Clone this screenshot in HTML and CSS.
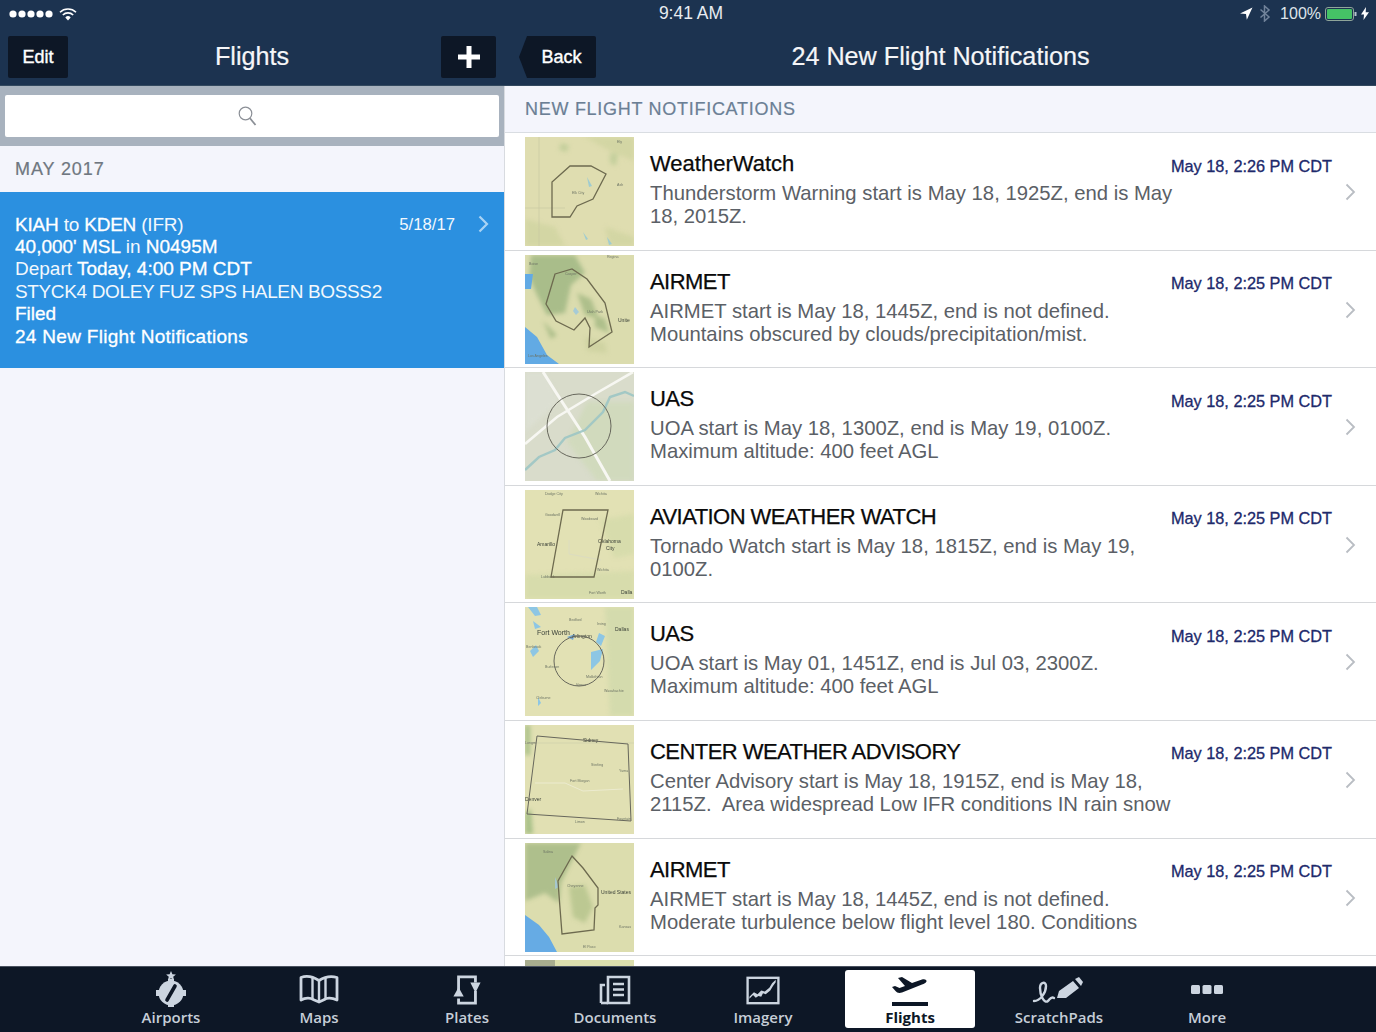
FILE: index.html
```html
<!DOCTYPE html>
<html lang="en">
<head>
<meta charset="utf-8">
<title>Flights</title>
<link rel="stylesheet" href="styles.css">
</head>
<body>
<div class="app">
  <header class="top">
    <div class="status">
      <div class="status-left">
        <svg class="dots" width="44" height="8" viewBox="0 0 44 8"><g fill="#fff"><circle cx="4" cy="4" r="3.6"/><circle cx="13" cy="4" r="3.6"/><circle cx="22" cy="4" r="3.6"/><circle cx="31" cy="4" r="3.6"/><circle cx="40" cy="4" r="3.6"/></g></svg>
        <svg width="18" height="14" viewBox="0 0 18 14"><g fill="none" stroke="#fff" stroke-width="1.6"><path d="M1 5.2a11.5 11.5 0 0 1 16 0"/><path d="M3.8 8a7.5 7.5 0 0 1 10.4 0"/></g><path d="M6.3 10.4a3.8 3.8 0 0 1 5.4 0L9 13.4z" fill="#fff"/></svg>
      </div>
      <div class="clock">9:41 AM</div>
      <div class="status-right">
        <svg width="13" height="13" viewBox="0 0 13 13"><path d="M12.5.5 0 6.4l6 .6.8 5.8z" fill="#fff"/></svg>
        <svg class="bt" width="12" height="17" viewBox="0 0 12 17"><path d="M1.5 4.5 10 12l-4.500 4V1l4.500 4L1.500 12.500" fill="none" stroke="#71839a" stroke-width="1.500"/></svg>
        <span class="pct">100%</span>
        <svg width="32" height="14" viewBox="0 0 32 14"><rect x=".5" y=".5" width="28" height="13" rx="2.500" fill="none" stroke="#8fa59a"/><rect x="2" y="2" width="25" height="10" rx="1.200" fill="#45c266"/><rect x="29.500" y="5" width="2" height="4" fill="#b8c4cf"/></svg>
        <svg class="bolt" width="8" height="13" viewBox="0 0 8 13"><path d="M5 0 0 7.500h3L2.500 13 8 5.200H4.700z" fill="#fff"/></svg>
      </div>
    </div>
    <div class="navs">
      <nav class="nav nav-left">
        <div class="nav-start"><span class="btn btn-edit">Edit</span></div>
        <h1 class="nav-title">Flights</h1>
        <div class="nav-end"><span class="btn btn-add"><svg width="22" height="22" viewBox="0 0 22 22"><path d="M8.500 0h5v8.500H22v5h-8.500V22h-5v-8.500H0v-5h8.500z" fill="#fff"/></svg></span></div>
      </nav>
      <nav class="nav nav-right">
        <div class="nav-start"><span class="btn btn-back">Back</span></div>
        <h1 class="nav-title">24 New Flight Notifications</h1>
        <div class="nav-end"></div>
      </nav>
    </div>
  </header>

  <main class="panes">
    <aside class="master">
      <div class="searchband">
        <div class="searchbox">
          <svg width="19" height="20" viewBox="0 0 19 20"><circle cx="7.500" cy="7.500" r="6.300" fill="none" stroke="#8b8f96" stroke-width="1.200"/><path d="M12 12.300 17.500 19" stroke="#8b8f96" stroke-width="1.800" fill="none"/></svg>
        </div>
      </div>
      <div class="month">MAY 2017</div>
      <div class="flight">
        <div class="flight-text">
          <div class="flight-head"><span class="tight"><b>KIAH</b> to <b>KDEN</b> (IFR)</span><span class="flight-date">5/18/17</span></div>
          <div><b>40,000' MSL</b> in <b>N0495M</b></div>
          <div>Depart <b>Today, 4:00 PM CDT</b></div>
          <div class="route">STYCK4 DOLEY FUZ SPS HALEN BOSSS2</div>
          <div><b>Filed</b></div>
          <div class="wide"><b>24 New Flight Notifications</b></div>
        </div>
        <svg class="flight-chev" width="11" height="18" viewBox="0 0 11 18"><path d="M1.500 1.500 9 9l-7.500 7.500" fill="none" stroke="#a9d3f4" stroke-width="2.200"/></svg>
      </div>
    </aside>

    <section class="detail">
      <div class="detail-head">NEW FLIGHT NOTIFICATIONS</div>
      <div class="list">

        <article class="row">
          <svg class="thumb" viewBox="0 0 109 109"><rect width="109" height="109" fill="#dfddb0"/><g class="soft"><path d="M60 0h49v24L85 14zM0 82l30 8 10 19H0zM80 90l29 10v9H85z" fill="#d3d6a4"/><path d="M36 6l8 2-2 7-8-2zM85 16l8 1-2 12-6-3z" fill="#c4cf9c"/></g><path d="M14 0v109M0 71h40" stroke="#c8c8a4" stroke-width=".7" fill="none"/><path d="M62 40l5 9-3 1zM58 95l5 7-2 1zM82 100l5 7-3 1z" fill="#a0ccd0"/><text x="47" y="57" class="maplabel">Elk City</text><text x="92" y="6" class="maplabel">Ely</text><text x="92" y="49" class="maplabel">Ash</text><path class="area" d="M45 29H66L81 37 68 62 52 69 45 80H27V45Z"/></svg>
          <div class="row-main">
            <div class="row-head"><h2>WeatherWatch</h2><time>May 18, 2:26 PM CDT</time></div>
            <p>Thunderstorm Warning start is May 18, 1925Z, end is May<br>18, 2015Z.</p>
          </div>
          <svg class="chev" width="11" height="18" viewBox="0 0 11 18"><path d="M1.500 1.500 9 9l-7.500 7.500" fill="none" stroke="#b9bdc3" stroke-width="1.800"/></svg>
        </article>

        <article class="row">
          <svg class="thumb" viewBox="0 0 109 109"><rect width="109" height="109" fill="#dbdcae"/><g class="soft"><path d="M6 0H50L60 18 46 30 40 58 22 60 12 40 4 22Z" fill="#a9bd8a"/><path d="M52 38l14 6 8 20-14-4zM70 60l10 4 4 14-14-6zM18 66l14 14-6 4z" fill="#aebf8b"/><path d="M60 82l20 6 2 10-20-2z" fill="#cfd3a2"/></g><path d="M0 72 12 82 22 100 34 109H0ZM0 19H8L6 34H0Z" fill="#62aae4"/><path d="M50 52l4 5-3 3-3-4z" fill="#a6cbd6"/><text x="4" y="10" class="maplabel">Boise</text><text x="40" y="20" class="maplabel">Casper</text><text x="3" y="102" class="maplabel">Los Angeles</text><text x="62" y="58" class="maplabel">Utah Park</text><text x="82" y="3" class="maplabel">Regina</text><text x="93" y="67" class="maplabel dark">Unite</text><path class="area" d="M30 19 47 14 62 24 80 48 87 77 64 92 65 73 60 63 49 75 31 66 21 49Z"/></svg>
          <div class="row-main">
            <div class="row-head"><h2 class="caps">AIRMET</h2><time>May 18, 2:25 PM CDT</time></div>
            <p>AIRMET start is May 18, 1445Z, end is not defined.<br>Mountains obscured by clouds/precipitation/mist.</p>
          </div>
          <svg class="chev" width="11" height="18" viewBox="0 0 11 18"><path d="M1.500 1.500 9 9l-7.500 7.500" fill="none" stroke="#b9bdc3" stroke-width="1.800"/></svg>
        </article>

        <article class="row">
          <svg class="thumb" viewBox="0 0 109 109"><rect width="109" height="109" fill="#d9dccb"/><g class="soft"><path d="M62 30l-20 40 30 39h37V30z" fill="#d1dabd"/><path d="M0 0h20l14 30L0 60z" fill="#dcdfd2"/></g><path d="M18 0 32 22 60 65 85 109" stroke="#f7f7f2" stroke-width="3" fill="none"/><path d="M0 72 32 45 70 22 108 0" stroke="#f7f7f2" stroke-width="2.600" fill="none"/><path d="M0 98 14 85 30 78 40 66 60 58 78 40 85 25 100 20 109 24" stroke="#9cc5c4" stroke-width="2.400" fill="none" class="softline"/><circle class="area thin" cx="54" cy="54" r="32"/></svg>
          <div class="row-main">
            <div class="row-head"><h2 class="caps">UAS</h2><time>May 18, 2:25 PM CDT</time></div>
            <p>UOA start is May 18, 1300Z, end is May 19, 0100Z.<br>Maximum altitude: 400 feet AGL</p>
          </div>
          <svg class="chev" width="11" height="18" viewBox="0 0 11 18"><path d="M1.500 1.500 9 9l-7.500 7.500" fill="none" stroke="#b9bdc3" stroke-width="1.800"/></svg>
        </article>

        <article class="row">
          <svg class="thumb" viewBox="0 0 109 109"><rect width="109" height="109" fill="#e2e1b4"/><g class="soft"><path d="M0 85l109-4v28H0zM75 30l34-6v40l-20 4z" fill="#d7dcac"/></g><path d="M44 50v14l32 6" stroke="#dcdcc0" fill="none"/><text x="20" y="5" class="maplabel">Dodge City</text><text x="70" y="5" class="maplabel">Wichita</text><text x="20" y="26" class="maplabel">Goodwell</text><text x="56" y="30" class="maplabel">Woodward</text><text x="12" y="56" class="maplabel dark">Amarillo</text><text x="73" y="53" class="maplabel dark">Oklahoma</text><text x="81" y="60" class="maplabel dark">City</text><text x="72" y="81" class="maplabel">Wichita</text><text x="16" y="88" class="maplabel">Lubbock</text><text x="64" y="104" class="maplabel">Fort Worth</text><text x="96" y="104" class="maplabel dark">Dalla</text><path class="area" d="M38 20H83L69 87H26Z"/></svg>
          <div class="row-main">
            <div class="row-head"><h2 class="caps">AVIATION WEATHER WATCH</h2><time>May 18, 2:25 PM CDT</time></div>
            <p>Tornado Watch start is May 18, 1815Z, end is May 19,<br>0100Z.</p>
          </div>
          <svg class="chev" width="11" height="18" viewBox="0 0 11 18"><path d="M1.500 1.500 9 9l-7.500 7.500" fill="none" stroke="#b9bdc3" stroke-width="1.800"/></svg>
        </article>

        <article class="row">
          <svg class="thumb" viewBox="0 0 109 109"><rect width="109" height="109" fill="#e2e1b4"/><g class="soft"><path d="M80 0h29v109H85z" fill="#d4dbad"/></g><path d="M3 0h9l4 8-6 1zM8 14l8 6-6 2zM5 44l6-6 3 6-6 6zM74 26l6 3-4 10-5-4zM66 45l12-3-3 12-9 9zM13 90l3 6-3 3z" fill="#8dc6e4"/><path d="M42 30l8-3-2 6z" fill="#74a8d4"/><text x="44" y="14" class="maplabel">Bedford</text><text x="72" y="18" class="maplabel">Irving</text><text x="90" y="24" class="maplabel dark">Dallas</text><text x="12" y="28" class="maplabel dark big">Fort Worth</text><text x="47" y="31" class="maplabel dark">Arlington</text><text x="1" y="41" class="maplabel">Benbrook</text><text x="20" y="61" class="maplabel">Burleson</text><text x="61" y="71" class="maplabel">Midlothian</text><text x="51" y="79" class="maplabel">Venus</text><text x="79" y="85" class="maplabel">Waxahachie</text><text x="11" y="92" class="maplabel">Cleburne</text><circle class="area thin" cx="54" cy="54" r="25"/></svg>
          <div class="row-main">
            <div class="row-head"><h2 class="caps">UAS</h2><time>May 18, 2:25 PM CDT</time></div>
            <p>UOA start is May 01, 1451Z, end is Jul 03, 2300Z.<br>Maximum altitude: 400 feet AGL</p>
          </div>
          <svg class="chev" width="11" height="18" viewBox="0 0 11 18"><path d="M1.500 1.500 9 9l-7.500 7.500" fill="none" stroke="#b9bdc3" stroke-width="1.800"/></svg>
        </article>

        <article class="row">
          <svg class="thumb" viewBox="0 0 109 109"><rect width="109" height="109" fill="#e1e0b3"/><g class="soft"><path d="M0 88l6-4 2 25H0zM0 0h5v30H0z" fill="#a8c088"/></g><path d="M10 58h30l18 8 40-2" stroke="#ecebcf" stroke-width="1" fill="none"/><path d="M0 18H109" stroke="#cfcfae" stroke-width=".7"/><text x="0" y="19" class="maplabel">Longm</text><text x="58" y="17" class="maplabel dark">Sidney</text><text x="66" y="41" class="maplabel">Sterling</text><text x="45" y="57" class="maplabel">Fort Morgan</text><text x="94" y="47" class="maplabel">Yuma</text><text x="0" y="76" class="maplabel dark">Denver</text><text x="50" y="98" class="maplabel">Limon</text><text x="92" y="95" class="maplabel">Fountain</text><path class="area thin" d="M12 11 103 19 106 96 2 89Z"/></svg>
          <div class="row-main">
            <div class="row-head"><h2 class="caps">CENTER WEATHER ADVISORY</h2><time>May 18, 2:25 PM CDT</time></div>
            <p>Center Advisory start is May 18, 1915Z, end is May 18,<br>2115Z.&nbsp; Area widespread Low IFR conditions IN rain snow</p>
          </div>
          <svg class="chev" width="11" height="18" viewBox="0 0 11 18"><path d="M1.500 1.500 9 9l-7.500 7.500" fill="none" stroke="#b9bdc3" stroke-width="1.800"/></svg>
        </article>

        <article class="row">
          <svg class="thumb" viewBox="0 0 109 109"><rect width="109" height="109" fill="#dcddae"/><g class="soft"><path d="M0 0h56L46 20 36 40 34 60 20 50 0 58z" fill="#aebf8c"/><path d="M44 44l16-2 8 22-8 16-12-6z" fill="#bcc892"/></g><path d="M0 72 14 82 24 94 32 109H0Z" fill="#66abe4"/><path d="M30 34l4 10-4 2z" fill="#a6c8cf"/><text x="18" y="10" class="maplabel">Salina</text><text x="42" y="44" class="maplabel">Cheyenne</text><text x="76" y="51" class="maplabel dark">United States</text><text x="94" y="85" class="maplabel">Kansas</text><text x="58" y="105" class="maplabel">El Paso</text><path class="area" d="M47 13 58 25 73 45V62L70 65 69 87 37 91 34 52 33 38Z"/></svg>
          <div class="row-main">
            <div class="row-head"><h2 class="caps">AIRMET</h2><time>May 18, 2:25 PM CDT</time></div>
            <p>AIRMET start is May 18, 1445Z, end is not defined.<br>Moderate turbulence below flight level 180. Conditions</p>
          </div>
          <svg class="chev" width="11" height="18" viewBox="0 0 11 18"><path d="M1.500 1.500 9 9l-7.500 7.500" fill="none" stroke="#b9bdc3" stroke-width="1.800"/></svg>
        </article>

        <article class="row">
          <svg class="thumb" viewBox="0 0 109 109"><rect width="109" height="109" fill="#dcdfae"/><path d="M0 0h30v12H0z" fill="#a8ad8e"/></svg>
        </article>
      </div>
    </section>
  </main>

  <footer class="tabs">
    <div class="tab">
      <svg class="tab-icon icon-airports" width="34" height="38" viewBox="0 0 34 38"><path d="m17 0 1.400 3.300 3.500.2-2.700 2.200.9 3.400-3.100-1.900-3.100 1.900.9-3.400-2.700-2.200 3.500-.2z" fill="#ccd5e0"/><circle cx="17" cy="22" r="12.500" fill="#ccd5e0"/><path d="M14 8h6v5h-6zM14 31h6v5h-6zM2 19h3.500v6H2zM28.500 19H32v6h-3.500z" fill="#ccd5e0"/><path d="M21 15 13 29" stroke="#0d1726" stroke-width="3.600" stroke-linecap="round" fill="none"/></svg>
      <span>Airports</span>
    </div>
    <div class="tab">
      <svg class="tab-icon" width="40" height="30" viewBox="0 0 40 30"><path d="M2 3.500C7 1.500 13 2 20 6.500 27 2 32 1.500 38 3.500V26C32 23 27 24 25.500 25.500L20 28 14 25.500C12 24 7 23 2 26Z" fill="none" stroke="#ccd5e0" stroke-width="2.800" stroke-linejoin="round"/><path d="M13.500 3.500V25M20 6.500V28M26.500 3.500V25" stroke="#ccd5e0" stroke-width="2.400" fill="none"/></svg>
      <span>Maps</span>
    </div>
    <div class="tab">
      <svg class="tab-icon" width="30" height="32" viewBox="0 0 32 34"><path d="M7 17V3H25V9M25 18V31H7V26" fill="none" stroke="#ccd5e0" stroke-width="3"/><path d="M7 15 1.500 25H12.500Z" fill="#ccd5e0" transform="translate(0 -1)"/><path d="M25 20 19.500 9H30.500Z" fill="#ccd5e0"/></svg>
      <span>Plates</span>
    </div>
    <div class="tab">
      <svg class="tab-icon" width="32" height="32" viewBox="0 0 32 32"><path d="M9 29V3H30V29ZM2 29V11H6" fill="none" stroke="#ccd5e0" stroke-width="2.600"/><path d="M2 29H9" stroke="#ccd5e0" stroke-width="2.600"/><path d="M14 10H25M14 15.500H25M14 21H25" stroke="#ccd5e0" stroke-width="2.400"/></svg>
      <span>Documents</span>
    </div>
    <div class="tab">
      <svg class="tab-icon icon-imagery" width="35" height="29" viewBox="0 0 38 32"><rect x="2" y="2" width="34" height="28" fill="none" stroke="#ccd5e0" stroke-width="2.600"/><path d="M4 23 9 18 13 20 17 16 21 17 26 13 29 8 33 4V7L30 11 27 16 22 20 19 19 17 23 14 22 11 24 8 21 4 25Z" fill="#ccd5e0"/></svg>
      <span>Imagery</span>
    </div>
    <div class="tab tab-active">
      <svg class="tab-icon" width="38" height="32" viewBox="0 0 38 32"><path d="M7 2 11 1 21 7 31 3.500C34 2.700 36 4 35.500 5.500 35 7 33 7.700 31 8.500L11 16.500C8 17.500 6 16.800 4.500 15L1 11 4 10 8.500 12 14 10Z" fill="#0d1726"/><rect x="1" y="26" width="36" height="4" fill="#0d1726"/></svg>
      <span>Flights</span>
    </div>
    <div class="tab">
      <svg class="tab-icon icon-pads" width="54" height="32" viewBox="0 0 54 32"><path d="M2 25C8 25 14 17 14 10 14 5 8 6 8 12 8 19 12 28 16 25 18 23 19 20 22 22" fill="none" stroke="#ccd5e0" stroke-width="2.400" stroke-linecap="round"/><path d="M25 22 27 15 41 5 47 12 34 22ZM43 3 47 1 51 6 49 10Z" fill="#ccd5e0"/></svg>
      <span>ScratchPads</span>
    </div>
    <div class="tab">
      <svg class="tab-icon icon-more" width="34" height="10" viewBox="0 0 34 10"><g fill="#ccd5e0"><rect x="1" y="0" width="9" height="9" rx="1.500"/><rect x="12.500" y="0" width="9" height="9" rx="1.500"/><rect x="24" y="0" width="9" height="9" rx="1.500"/></g></svg>
      <span>More</span>
    </div>
  </footer>
</div>
</body>
</html>
```

FILE: styles.css
```css
* { box-sizing: border-box; }
html, body { margin: 0; padding: 0; }
body { font-family: "Liberation Sans", Arial, sans-serif; background: #fff; }
.app { width: 1376px; height: 1032px; display: flex; flex-direction: column; overflow: hidden; }

.top { height: 86px; background: #1c3350; color: #fff; flex: none; box-shadow: inset 0 -1px 0 #33495f; }
.status { height: 27px; display: grid; grid-template-columns: 1fr auto 1fr; align-items: center; padding: 0 7px 0 9px; }
.status-left { display: flex; align-items: center; gap: 6px; }
.status-right { display: flex; align-items: center; justify-content: flex-end; gap: 4px; }
.clock { font-size: 17.500px; color: #e8ecf0; margin-left: 4px; }
.pct { font-size: 16px; color: #dfe5ea; margin-left: 5px; }
.bt { margin-left: 2px; }

.navs { display: flex; height: 59px; }
.nav { display: grid; grid-template-columns: 1fr auto 1fr; align-items: start; padding-top: 9px; }
.nav-left { width: 505px; padding-left: 8px; padding-right: 9px; }
.nav-right { flex: 1; padding-left: 14px; padding-right: 14px; }
.nav-end { display: flex; justify-content: flex-end; }
.nav-title { margin: 0; font-size: 25.200px; font-weight: 400; line-height: 40px; color: #f5f6f8; -webkit-text-stroke: .2px #f5f6f8; }
.btn { height: 42px; background: #0d1726; color: #fff; display: inline-flex; align-items: center; justify-content: center; border-radius: 2px; font-size: 18px; font-weight: 400; -webkit-text-stroke: .4px #fff; }
.btn-edit { width: 60px; }
.btn-add { width: 55px; }
.btn-back { width: 77px; padding-left: 8px; clip-path: polygon(8px 0, 100% 0, 100% 100%, 8px 100%, 0 50%); }

.panes { flex: 1; display: flex; min-height: 0; }
.master { width: 505px; flex: none; background: #f4f5fc; border-right: 1px solid #d8dbe0; }
.searchband { height: 60px; background: #a8b2be; padding: 9px 5px; }
.searchbox { height: 42px; background: #fff; border-radius: 2px; display: flex; align-items: center; justify-content: center; padding-right: 10px; }
.month { height: 46px; line-height: 46px; padding-left: 15px; font-size: 18px; color: #6f7780; letter-spacing: .9px; -webkit-text-stroke: .2px #6f7780; }
.flight { height: 176px; background: #2b90e0; color: #f2f8fd; padding: 21.500px 15px 0 15px; display: flex; position: relative; font-size: 19px; line-height: 22.400px; }
.flight-text { flex: 1; }
.flight b { font-weight: 400; -webkit-text-stroke: .3px #fff; color: #fff; }
.flight-head { display: flex; justify-content: space-between; padding-right: 34px; }
.flight-date { font-size: 16.700px; }
.tight { letter-spacing: -.2px; }
.route { letter-spacing: -.36px; }
.wide { letter-spacing: .3px; }
.flight-chev { position: absolute; right: 15px; top: 23px; }

.detail { flex: 1; display: flex; flex-direction: column; min-width: 0; }
.detail-head { height: 47px; flex: none; line-height: 47px; background: #f4f5fc; border-bottom: 1px solid #d9dde2; padding-left: 20px; font-size: 18px; color: #6b7f95; letter-spacing: .72px; -webkit-text-stroke: .2px #6b7f95; }
.list { flex: 1; overflow: hidden; }
.row { height: 117.600px; display: flex; align-items: flex-start; padding: 4px 20px 0 20px; border-bottom: 1px solid #d6d8db; }
.thumb { width: 109px; height: 109px; flex: none; filter: blur(.4px); }
.soft { filter: blur(2px); }
.softline { opacity: .9; }
.row-main { flex: 1; margin-left: 16px; padding-top: 13px; min-width: 0; }
.row-head { display: flex; justify-content: space-between; align-items: center; height: 28px; }
.row-head h2 { margin: 0; font-size: 22px; font-weight: 400; color: #0a0a0a; -webkit-text-stroke: .25px #0a0a0a; }
.row-head h2.caps { letter-spacing: -.55px; }
.row-head time { font-size: 16.300px; color: #20296b; -webkit-text-stroke: .3px #20296b; padding-top: 4px; }
.row-main p { margin: 4px 0 0; font-size: 20.300px; line-height: 23px; color: #5b6066; }
.chev { flex: none; margin-left: 13px; margin-top: 46px; }

.maplabel { font-size: 3.600px; fill: #6d7465; font-family: "Liberation Sans", Arial, sans-serif; }
.maplabel.dark { fill: #3a4038; font-size: 5px; }
.maplabel.big { font-size: 7px; }
.area { fill: none; stroke: #6d6a4f; stroke-width: 1.300; }
.area.thin { stroke: #67675c; stroke-width: 1; }

.tabs { height: 66px; flex: none; background: #0d1726; display: flex; padding-left: 97px; border-top: 1px solid #4a5260; position: relative; z-index: 1; }
.tab { width: 148px; height: 65px; display: flex; flex-direction: column; align-items: center; justify-content: flex-end; color: #c6ced8; font-family: "Open Sans", sans-serif; font-size: 15px; font-weight: 600; line-height: 18px; padding-bottom: 6px; position: relative; }
.tab-icon { position: absolute; left: 50%; top: 7px; transform: translateX(-50%); }
.icon-airports { top: 4px; }
.icon-imagery { top: 9px; }
.icon-pads { top: 9px; }
.icon-more { top: 18px; }
.tab-active { width: 130px; height: 58px; margin: 3px 10px 0 8px; background: #fff; color: #0d1726; border-radius: 3px; font-weight: 700; padding-bottom: 2px; }
.tab-active .tab-icon { top: 6px; }
```
